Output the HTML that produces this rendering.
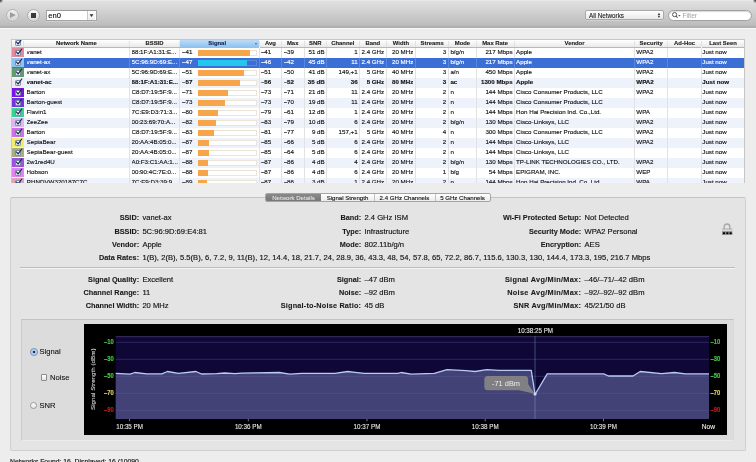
<!DOCTYPE html>
<html><head><meta charset="utf-8"><style>
*{box-sizing:border-box}
html,body{margin:0;padding:0}
body{width:756px;height:462px;overflow:hidden;position:relative;background:#ededed;font-family:"Liberation Sans",sans-serif;color:#000}
.abs{position:absolute}
#toolbar{left:0;top:0;width:756px;height:28.5px;background:linear-gradient(#eeeeee 0,#e0e0e0 1.2px,#d2d2d2 40%,#bdbdbd 88%,#a9a9a9 100%);border-bottom:1px solid #f8f8f8}
.rbtn{position:absolute;width:13px;height:13px;border-radius:50%;background:linear-gradient(#fafafa,#d8d8d8);border:1px solid #a8a8a8;box-shadow:0 0.5px 0 rgba(255,255,255,.6)}
#table{left:10.5px;top:39px;width:734.5px;height:144.3px;overflow:hidden;background:#fff;border:1px solid #c6c6c6;border-bottom:none}
.hdr{position:absolute;top:0;height:8px;-webkit-text-stroke:.1px currentColor;background:linear-gradient(#ffffff,#e9e9e9);border-bottom:1px solid #b8b8b8;font-weight:bold;font-size:5.9px;line-height:7.2px;text-align:center;color:#1a1a1a}
.hsep{position:absolute;top:1px;width:1px;height:6px;background:#e2e2e2}
.row{position:absolute;left:0;width:734px;height:10px}
.cell{position:absolute;top:-0.6px;height:10px;line-height:10px;font-size:6.2px;white-space:nowrap;overflow:hidden;color:#000;-webkit-text-stroke:0.14px currentColor}
.r{text-align:right}
.bar{position:absolute;height:6px;background:#f6a54a}
.track{position:absolute;height:6px;border:1px solid #ece4d6;background:#fff}
.cb{position:absolute;width:5.6px;height:5.6px;border:0.7px solid #7d8aa3;border-radius:1.3px;background:linear-gradient(#ffffff,#cfdcee)}
</style></head><body><div id="root" style="position:absolute;left:0;top:0;width:756px;height:462px;will-change:transform">

<div id="toolbar" class="abs"></div>
<div class="abs" style="left:0;top:0;width:4px;height:4px;background:radial-gradient(circle at 0 0,#2a2a2a 0,#5a5a5a 1px,rgba(200,200,200,0) 3.5px)"></div>
<div class="abs" style="left:752px;top:0;width:4px;height:4px;background:radial-gradient(circle at 100% 0,#2a2a2a 0,#5a5a5a 1px,rgba(200,200,200,0) 3.5px)"></div>
<div class="rbtn" style="left:6px;top:9px;opacity:.75"></div>
<svg class="abs" style="left:8px;top:11px" width="10" height="9" viewBox="8 11 10 9"><path d="M10 12.3 L15.8 15.1 L10 17.9 Z" fill="#9c9c9c"/></svg>
<div class="rbtn" style="left:26.5px;top:9px"></div>
<div class="abs" style="left:30.8px;top:12.8px;width:5.3px;height:5.2px;background:#3a3a3a"></div>
<div class="abs" style="left:46px;top:10px;width:50.5px;height:11px;background:#fff;border:1px solid #a4a4a4;border-top-color:#9a9a9a;box-shadow:0 .5px 0 rgba(255,255,255,.45)"></div>
<div class="abs" style="left:86.6px;top:11px;width:8.9px;height:9px;border-left:1px solid #c8c8c8;background:linear-gradient(#fdfdfd,#ededed)"></div>
<svg class="abs" style="left:86px;top:10px" width="10" height="11" viewBox="86 10 10 11"><path d="M89.6 14.2 H93.4 L91.5 16.9 Z" fill="#2a2a2a"/></svg>
<div class="abs" style="left:48.3px;top:11.4px;height:10px;line-height:10px;font-size:7.6px;color:#000;-webkit-text-stroke:.1px #000">en0</div>
<div class="abs" style="left:585px;top:10px;width:79px;height:10px;border-radius:2px;background:linear-gradient(#ffffff,#e8e8e8);border:1px solid #a8a8a8;box-shadow:0 .5px 0 rgba(255,255,255,.5)"></div>
<div class="abs" style="left:589px;top:10.6px;height:10px;line-height:10px;font-size:6.3px;color:#222;-webkit-text-stroke:.1px #222">All Networks</div>
<div class="abs" style="left:657px;top:11.5px;font-size:4px;line-height:3.5px;color:#333">&#9650;<br>&#9660;</div>
<div class="abs" style="left:668px;top:10px;width:83.5px;height:11px;border-radius:6px;background:#fff;border:1px solid #a0a0a0;box-shadow:inset 0 1px 1px rgba(0,0,0,.15)"></div>
<svg class="abs" style="left:670px;top:10px" width="12" height="11" viewBox="670 10 12 11"><circle cx="674.6" cy="14.6" r="2.1" fill="none" stroke="#5a5a5a" stroke-width="1"/><line x1="676.1" y1="16.1" x2="677.6" y2="17.6" stroke="#5a5a5a" stroke-width="1.2"/><path d="M678.2 15h2.4l-1.2 1.4z" fill="#5a5a5a"/></svg>
<div class="abs" style="left:682.5px;top:10px;height:11px;line-height:11px;font-size:6.5px;color:#a0a0a0">Filter</div>
<div id="table" class="abs">
<div class="hdr" style="left:0.0px;width:12.100000000000001px;"></div>
<div class="hdr" style="left:12.100000000000001px;width:105.5px;">Network Name</div>
<div class="hsep" style="left:11.600000000000001px"></div>
<div class="hdr" style="left:117.6px;width:50.80000000000001px;">BSSID</div>
<div class="hsep" style="left:117.1px"></div>
<div class="hdr" style="left:168.4px;width:79.6px;background:linear-gradient(#bcdcf8,#8fc3f0);color:#10204a;padding-right:5px;">Signal</div>
<div class="hsep" style="left:167.9px"></div>
<div class="hdr" style="left:248.0px;width:21.69999999999999px;">Avg</div>
<div class="hsep" style="left:247.5px"></div>
<div class="hdr" style="left:269.7px;width:23.0px;">Max</div>
<div class="hsep" style="left:269.2px"></div>
<div class="hdr" style="left:292.7px;width:22.0px;">SNR</div>
<div class="hsep" style="left:292.2px"></div>
<div class="hdr" style="left:314.7px;width:33.19999999999999px;">Channel</div>
<div class="hsep" style="left:314.2px"></div>
<div class="hdr" style="left:347.9px;width:26.80000000000001px;">Band</div>
<div class="hsep" style="left:347.4px"></div>
<div class="hdr" style="left:374.7px;width:29.5px;">Width</div>
<div class="hsep" style="left:374.2px"></div>
<div class="hdr" style="left:404.2px;width:33.10000000000002px;">Streams</div>
<div class="hsep" style="left:403.7px"></div>
<div class="hdr" style="left:437.3px;width:27.30000000000001px;">Mode</div>
<div class="hsep" style="left:436.8px"></div>
<div class="hdr" style="left:464.6px;width:38.10000000000002px;">Max Rate</div>
<div class="hsep" style="left:464.1px"></div>
<div class="hdr" style="left:502.70000000000005px;width:120.69999999999993px;">Vendor</div>
<div class="hsep" style="left:502.20000000000005px"></div>
<div class="hdr" style="left:623.4px;width:32.700000000000045px;">Security</div>
<div class="hsep" style="left:622.9px"></div>
<div class="hdr" style="left:656.1px;width:33.89999999999998px;">Ad-Hoc</div>
<div class="hsep" style="left:655.6px"></div>
<div class="hdr" style="left:690.0px;width:43.10000000000002px;">Last Seen</div>
<div class="hsep" style="left:689.5px"></div>
<div class="cb" style="left:3.5px;top:0.2px"></div>
<div class="abs" style="left:243.3px;top:3px;width:0;height:0;border-top:2.4px solid #40608a;border-left:1.6px solid transparent;border-right:1.6px solid transparent"></div>
<svg class="abs" style="left:0px;top:-2.1px" width="13" height="10" viewBox="0 0 13 10"><path d="M4.3 3.9 L6.1 5.8 L9.8 1.0" fill="none" stroke="#14234f" stroke-width="1.15" stroke-linecap="round" stroke-linejoin="round"/></svg>
<div class="row" style="top:8px;background:#ffffff">
<div class="abs" style="left:0.1px;top:0;width:12.4px;height:9.4px;background:#e58a9a"></div>
<div class="cb" style="left:3.5px;top:2.0px"></div>
<svg class="abs" style="left:0px;top:0px" width="13" height="10" viewBox="0 0 13 10"><path d="M4.3 3.9 L6.1 5.8 L9.8 1.0" fill="none" stroke="#14234f" stroke-width="1.15" stroke-linecap="round" stroke-linejoin="round"/></svg>
<div class="cell" style="left:15.100000000000001px;width:102.5px;color:#111;">vanet</div>
<div class="cell" style="left:120.0px;width:48.40000000000001px;color:#111;">88:1F:A1:31:E...</div>
<div class="cell" style="left:170.6px;width:77.39999999999999px;color:#111;">–41</div>
<div class="track" style="left:186.9px;top:2.1px;width:58.400000000000006px;"></div>
<div class="bar" style="left:186.9px;top:2.1px;width:52px;"></div>
<div class="cell" style="left:249.4px;width:20.29999999999999px;color:#111;">–41</div>
<div class="cell" style="left:272.0px;width:20.7px;color:#111;">–39</div>
<div class="cell r" style="left:292.7px;width:20.5px;color:#111;">51 dB</div>
<div class="cell r" style="left:314.7px;width:31.49999999999999px;color:#111;">1</div>
<div class="cell r" style="left:347.9px;width:24.80000000000001px;color:#111;">2.4 GHz</div>
<div class="cell r" style="left:374.7px;width:27.1px;color:#111;">20 MHz</div>
<div class="cell r" style="left:404.2px;width:30.50000000000002px;color:#111;">3</div>
<div class="cell" style="left:438.90000000000003px;width:25.70000000000001px;color:#111;">b/g/n</div>
<div class="cell r" style="left:464.6px;width:36.50000000000002px;color:#111;">217 Mbps</div>
<div class="cell" style="left:504.6px;width:118.79999999999993px;color:#111;">Apple</div>
<div class="cell" style="left:624.8px;width:31.300000000000047px;color:#111;">WPA2</div>
<div class="cell" style="left:690.8px;width:42.300000000000026px;color:#111;">Just now</div>
<div class="abs" style="left:117.1px;top:0;width:1px;height:10px;background:#e2e2e2"></div>
<div class="abs" style="left:167.9px;top:0;width:1px;height:10px;background:#e2e2e2"></div>
<div class="abs" style="left:247.5px;top:0;width:1px;height:10px;background:#e2e2e2"></div>
<div class="abs" style="left:269.2px;top:0;width:1px;height:10px;background:#e2e2e2"></div>
<div class="abs" style="left:292.2px;top:0;width:1px;height:10px;background:#e2e2e2"></div>
<div class="abs" style="left:314.2px;top:0;width:1px;height:10px;background:#e2e2e2"></div>
<div class="abs" style="left:347.4px;top:0;width:1px;height:10px;background:#e2e2e2"></div>
<div class="abs" style="left:374.2px;top:0;width:1px;height:10px;background:#e2e2e2"></div>
<div class="abs" style="left:403.7px;top:0;width:1px;height:10px;background:#e2e2e2"></div>
<div class="abs" style="left:436.8px;top:0;width:1px;height:10px;background:#e2e2e2"></div>
<div class="abs" style="left:464.1px;top:0;width:1px;height:10px;background:#e2e2e2"></div>
<div class="abs" style="left:502.20000000000005px;top:0;width:1px;height:10px;background:#e2e2e2"></div>
<div class="abs" style="left:622.9px;top:0;width:1px;height:10px;background:#e2e2e2"></div>
<div class="abs" style="left:655.6px;top:0;width:1px;height:10px;background:#e2e2e2"></div>
<div class="abs" style="left:689.5px;top:0;width:1px;height:10px;background:#e2e2e2"></div>
</div>
<div class="row" style="top:18px;background:#3b6fd6">
<div class="abs" style="left:0.1px;top:0;width:12.4px;height:9.4px;background:#8cc4f4"></div>
<div class="cb" style="left:3.5px;top:2.0px"></div>
<svg class="abs" style="left:0px;top:0px" width="13" height="10" viewBox="0 0 13 10"><path d="M4.3 3.9 L6.1 5.8 L9.8 1.0" fill="none" stroke="#14234f" stroke-width="1.15" stroke-linecap="round" stroke-linejoin="round"/></svg>
<div class="cell" style="left:15.100000000000001px;width:102.5px;color:#fff;">vanet-ax</div>
<div class="cell" style="left:120.0px;width:48.40000000000001px;color:#fff;">5C:96:9D:69:E...</div>
<div class="cell" style="left:170.6px;width:77.39999999999999px;color:#fff;">–47</div>
<div class="track" style="left:186.9px;top:2.1px;width:58.400000000000006px;background:#3b6fd6;border-color:#5a86dc"></div>
<div class="bar" style="left:186.9px;top:2.1px;width:48.7px;background:#22c6ee"></div>
<div class="cell" style="left:249.4px;width:20.29999999999999px;color:#fff;">–46</div>
<div class="cell" style="left:272.0px;width:20.7px;color:#fff;">–42</div>
<div class="cell r" style="left:292.7px;width:20.5px;color:#fff;">45 dB</div>
<div class="cell r" style="left:314.7px;width:31.49999999999999px;color:#fff;">11</div>
<div class="cell r" style="left:347.9px;width:24.80000000000001px;color:#fff;">2.4 GHz</div>
<div class="cell r" style="left:374.7px;width:27.1px;color:#fff;">20 MHz</div>
<div class="cell r" style="left:404.2px;width:30.50000000000002px;color:#fff;">3</div>
<div class="cell" style="left:438.90000000000003px;width:25.70000000000001px;color:#fff;">b/g/n</div>
<div class="cell r" style="left:464.6px;width:36.50000000000002px;color:#fff;">217 Mbps</div>
<div class="cell" style="left:504.6px;width:118.79999999999993px;color:#fff;">Apple</div>
<div class="cell" style="left:624.8px;width:31.300000000000047px;color:#fff;">WPA2</div>
<div class="cell" style="left:690.8px;width:42.300000000000026px;color:#fff;">Just now</div>
<div class="abs" style="left:117.1px;top:0;width:1px;height:10px;background:#5a86dc"></div>
<div class="abs" style="left:167.9px;top:0;width:1px;height:10px;background:#5a86dc"></div>
<div class="abs" style="left:247.5px;top:0;width:1px;height:10px;background:#5a86dc"></div>
<div class="abs" style="left:269.2px;top:0;width:1px;height:10px;background:#5a86dc"></div>
<div class="abs" style="left:292.2px;top:0;width:1px;height:10px;background:#5a86dc"></div>
<div class="abs" style="left:314.2px;top:0;width:1px;height:10px;background:#5a86dc"></div>
<div class="abs" style="left:347.4px;top:0;width:1px;height:10px;background:#5a86dc"></div>
<div class="abs" style="left:374.2px;top:0;width:1px;height:10px;background:#5a86dc"></div>
<div class="abs" style="left:403.7px;top:0;width:1px;height:10px;background:#5a86dc"></div>
<div class="abs" style="left:436.8px;top:0;width:1px;height:10px;background:#5a86dc"></div>
<div class="abs" style="left:464.1px;top:0;width:1px;height:10px;background:#5a86dc"></div>
<div class="abs" style="left:502.20000000000005px;top:0;width:1px;height:10px;background:#5a86dc"></div>
<div class="abs" style="left:622.9px;top:0;width:1px;height:10px;background:#5a86dc"></div>
<div class="abs" style="left:655.6px;top:0;width:1px;height:10px;background:#5a86dc"></div>
<div class="abs" style="left:689.5px;top:0;width:1px;height:10px;background:#5a86dc"></div>
</div>
<div class="row" style="top:28px;background:#ffffff">
<div class="abs" style="left:0.1px;top:0;width:12.4px;height:9.4px;background:#5e9c6e"></div>
<div class="cb" style="left:3.5px;top:2.0px"></div>
<svg class="abs" style="left:0px;top:0px" width="13" height="10" viewBox="0 0 13 10"><path d="M4.3 3.9 L6.1 5.8 L9.8 1.0" fill="none" stroke="#14234f" stroke-width="1.15" stroke-linecap="round" stroke-linejoin="round"/></svg>
<div class="cell" style="left:15.100000000000001px;width:102.5px;color:#111;">vanet-ax</div>
<div class="cell" style="left:120.0px;width:48.40000000000001px;color:#111;">5C:96:9D:69:E...</div>
<div class="cell" style="left:170.6px;width:77.39999999999999px;color:#111;">–51</div>
<div class="track" style="left:186.9px;top:2.1px;width:58.400000000000006px;"></div>
<div class="bar" style="left:186.9px;top:2.1px;width:46px;"></div>
<div class="cell" style="left:249.4px;width:20.29999999999999px;color:#111;">–51</div>
<div class="cell" style="left:272.0px;width:20.7px;color:#111;">–50</div>
<div class="cell r" style="left:292.7px;width:20.5px;color:#111;">41 dB</div>
<div class="cell r" style="left:314.7px;width:31.49999999999999px;color:#111;">149,+1</div>
<div class="cell r" style="left:347.9px;width:24.80000000000001px;color:#111;">5 GHz</div>
<div class="cell r" style="left:374.7px;width:27.1px;color:#111;">40 MHz</div>
<div class="cell r" style="left:404.2px;width:30.50000000000002px;color:#111;">3</div>
<div class="cell" style="left:438.90000000000003px;width:25.70000000000001px;color:#111;">a/n</div>
<div class="cell r" style="left:464.6px;width:36.50000000000002px;color:#111;">450 Mbps</div>
<div class="cell" style="left:504.6px;width:118.79999999999993px;color:#111;">Apple</div>
<div class="cell" style="left:624.8px;width:31.300000000000047px;color:#111;">WPA2</div>
<div class="cell" style="left:690.8px;width:42.300000000000026px;color:#111;">Just now</div>
<div class="abs" style="left:117.1px;top:0;width:1px;height:10px;background:#e2e2e2"></div>
<div class="abs" style="left:167.9px;top:0;width:1px;height:10px;background:#e2e2e2"></div>
<div class="abs" style="left:247.5px;top:0;width:1px;height:10px;background:#e2e2e2"></div>
<div class="abs" style="left:269.2px;top:0;width:1px;height:10px;background:#e2e2e2"></div>
<div class="abs" style="left:292.2px;top:0;width:1px;height:10px;background:#e2e2e2"></div>
<div class="abs" style="left:314.2px;top:0;width:1px;height:10px;background:#e2e2e2"></div>
<div class="abs" style="left:347.4px;top:0;width:1px;height:10px;background:#e2e2e2"></div>
<div class="abs" style="left:374.2px;top:0;width:1px;height:10px;background:#e2e2e2"></div>
<div class="abs" style="left:403.7px;top:0;width:1px;height:10px;background:#e2e2e2"></div>
<div class="abs" style="left:436.8px;top:0;width:1px;height:10px;background:#e2e2e2"></div>
<div class="abs" style="left:464.1px;top:0;width:1px;height:10px;background:#e2e2e2"></div>
<div class="abs" style="left:502.20000000000005px;top:0;width:1px;height:10px;background:#e2e2e2"></div>
<div class="abs" style="left:622.9px;top:0;width:1px;height:10px;background:#e2e2e2"></div>
<div class="abs" style="left:655.6px;top:0;width:1px;height:10px;background:#e2e2e2"></div>
<div class="abs" style="left:689.5px;top:0;width:1px;height:10px;background:#e2e2e2"></div>
</div>
<div class="row" style="top:38px;background:#eef3fb">
<div class="abs" style="left:0.1px;top:0;width:12.4px;height:9.4px;background:#f0ecf6"></div>
<div class="cb" style="left:3.5px;top:2.0px"></div>
<svg class="abs" style="left:0px;top:0px" width="13" height="10" viewBox="0 0 13 10"><path d="M4.3 3.9 L6.1 5.8 L9.8 1.0" fill="none" stroke="#14234f" stroke-width="1.15" stroke-linecap="round" stroke-linejoin="round"/></svg>
<div class="cell" style="left:15.100000000000001px;width:102.5px;color:#111;font-weight:bold;">vanet-ac</div>
<div class="cell" style="left:120.0px;width:48.40000000000001px;color:#111;font-weight:bold;">88:1F:A1:31:E...</div>
<div class="cell" style="left:170.6px;width:77.39999999999999px;color:#111;font-weight:bold;">–57</div>
<div class="track" style="left:186.9px;top:2.1px;width:58.400000000000006px;"></div>
<div class="bar" style="left:186.9px;top:2.1px;width:41.7px;"></div>
<div class="cell" style="left:249.4px;width:20.29999999999999px;color:#111;font-weight:bold;">–56</div>
<div class="cell" style="left:272.0px;width:20.7px;color:#111;font-weight:bold;">–52</div>
<div class="cell r" style="left:292.7px;width:20.5px;color:#111;font-weight:bold;">35 dB</div>
<div class="cell r" style="left:314.7px;width:31.49999999999999px;color:#111;font-weight:bold;">36</div>
<div class="cell r" style="left:347.9px;width:24.80000000000001px;color:#111;font-weight:bold;">5 GHz</div>
<div class="cell r" style="left:374.7px;width:27.1px;color:#111;font-weight:bold;">80 MHz</div>
<div class="cell r" style="left:404.2px;width:30.50000000000002px;color:#111;font-weight:bold;">3</div>
<div class="cell" style="left:438.90000000000003px;width:25.70000000000001px;color:#111;font-weight:bold;">ac</div>
<div class="cell r" style="left:464.6px;width:36.50000000000002px;color:#111;font-weight:bold;">1300 Mbps</div>
<div class="cell" style="left:504.6px;width:118.79999999999993px;color:#111;font-weight:bold;">Apple</div>
<div class="cell" style="left:624.8px;width:31.300000000000047px;color:#111;font-weight:bold;">WPA2</div>
<div class="cell" style="left:690.8px;width:42.300000000000026px;color:#111;font-weight:bold;">Just now</div>
<div class="abs" style="left:117.1px;top:0;width:1px;height:10px;background:#e2e2e2"></div>
<div class="abs" style="left:167.9px;top:0;width:1px;height:10px;background:#e2e2e2"></div>
<div class="abs" style="left:247.5px;top:0;width:1px;height:10px;background:#e2e2e2"></div>
<div class="abs" style="left:269.2px;top:0;width:1px;height:10px;background:#e2e2e2"></div>
<div class="abs" style="left:292.2px;top:0;width:1px;height:10px;background:#e2e2e2"></div>
<div class="abs" style="left:314.2px;top:0;width:1px;height:10px;background:#e2e2e2"></div>
<div class="abs" style="left:347.4px;top:0;width:1px;height:10px;background:#e2e2e2"></div>
<div class="abs" style="left:374.2px;top:0;width:1px;height:10px;background:#e2e2e2"></div>
<div class="abs" style="left:403.7px;top:0;width:1px;height:10px;background:#e2e2e2"></div>
<div class="abs" style="left:436.8px;top:0;width:1px;height:10px;background:#e2e2e2"></div>
<div class="abs" style="left:464.1px;top:0;width:1px;height:10px;background:#e2e2e2"></div>
<div class="abs" style="left:502.20000000000005px;top:0;width:1px;height:10px;background:#e2e2e2"></div>
<div class="abs" style="left:622.9px;top:0;width:1px;height:10px;background:#e2e2e2"></div>
<div class="abs" style="left:655.6px;top:0;width:1px;height:10px;background:#e2e2e2"></div>
<div class="abs" style="left:689.5px;top:0;width:1px;height:10px;background:#e2e2e2"></div>
</div>
<div class="row" style="top:48px;background:#ffffff">
<div class="abs" style="left:0.1px;top:0;width:12.4px;height:9.4px;background:#7a14e6"></div>
<div class="cb" style="left:3.5px;top:2.0px"></div>
<svg class="abs" style="left:0px;top:0px" width="13" height="10" viewBox="0 0 13 10"><path d="M4.3 3.9 L6.1 5.8 L9.8 1.0" fill="none" stroke="#14234f" stroke-width="1.15" stroke-linecap="round" stroke-linejoin="round"/></svg>
<div class="cell" style="left:15.100000000000001px;width:102.5px;color:#111;">Barton</div>
<div class="cell" style="left:120.0px;width:48.40000000000001px;color:#111;">C8:D7:19:5F:9...</div>
<div class="cell" style="left:170.6px;width:77.39999999999999px;color:#111;">–71</div>
<div class="track" style="left:186.9px;top:2.1px;width:58.400000000000006px;"></div>
<div class="bar" style="left:186.9px;top:2.1px;width:29.6px;"></div>
<div class="cell" style="left:249.4px;width:20.29999999999999px;color:#111;">–73</div>
<div class="cell" style="left:272.0px;width:20.7px;color:#111;">–71</div>
<div class="cell r" style="left:292.7px;width:20.5px;color:#111;">21 dB</div>
<div class="cell r" style="left:314.7px;width:31.49999999999999px;color:#111;">11</div>
<div class="cell r" style="left:347.9px;width:24.80000000000001px;color:#111;">2.4 GHz</div>
<div class="cell r" style="left:374.7px;width:27.1px;color:#111;">20 MHz</div>
<div class="cell r" style="left:404.2px;width:30.50000000000002px;color:#111;">2</div>
<div class="cell" style="left:438.90000000000003px;width:25.70000000000001px;color:#111;">n</div>
<div class="cell r" style="left:464.6px;width:36.50000000000002px;color:#111;">144 Mbps</div>
<div class="cell" style="left:504.6px;width:118.79999999999993px;color:#111;">Cisco Consumer Products, LLC</div>
<div class="cell" style="left:624.8px;width:31.300000000000047px;color:#111;">WPA2</div>
<div class="cell" style="left:690.8px;width:42.300000000000026px;color:#111;">Just now</div>
<div class="abs" style="left:117.1px;top:0;width:1px;height:10px;background:#e2e2e2"></div>
<div class="abs" style="left:167.9px;top:0;width:1px;height:10px;background:#e2e2e2"></div>
<div class="abs" style="left:247.5px;top:0;width:1px;height:10px;background:#e2e2e2"></div>
<div class="abs" style="left:269.2px;top:0;width:1px;height:10px;background:#e2e2e2"></div>
<div class="abs" style="left:292.2px;top:0;width:1px;height:10px;background:#e2e2e2"></div>
<div class="abs" style="left:314.2px;top:0;width:1px;height:10px;background:#e2e2e2"></div>
<div class="abs" style="left:347.4px;top:0;width:1px;height:10px;background:#e2e2e2"></div>
<div class="abs" style="left:374.2px;top:0;width:1px;height:10px;background:#e2e2e2"></div>
<div class="abs" style="left:403.7px;top:0;width:1px;height:10px;background:#e2e2e2"></div>
<div class="abs" style="left:436.8px;top:0;width:1px;height:10px;background:#e2e2e2"></div>
<div class="abs" style="left:464.1px;top:0;width:1px;height:10px;background:#e2e2e2"></div>
<div class="abs" style="left:502.20000000000005px;top:0;width:1px;height:10px;background:#e2e2e2"></div>
<div class="abs" style="left:622.9px;top:0;width:1px;height:10px;background:#e2e2e2"></div>
<div class="abs" style="left:655.6px;top:0;width:1px;height:10px;background:#e2e2e2"></div>
<div class="abs" style="left:689.5px;top:0;width:1px;height:10px;background:#e2e2e2"></div>
</div>
<div class="row" style="top:58px;background:#eef3fb">
<div class="abs" style="left:0.1px;top:0;width:12.4px;height:9.4px;background:#7234de"></div>
<div class="cb" style="left:3.5px;top:2.0px"></div>
<svg class="abs" style="left:0px;top:0px" width="13" height="10" viewBox="0 0 13 10"><path d="M4.3 3.9 L6.1 5.8 L9.8 1.0" fill="none" stroke="#14234f" stroke-width="1.15" stroke-linecap="round" stroke-linejoin="round"/></svg>
<div class="cell" style="left:15.100000000000001px;width:102.5px;color:#111;">Barton-guest</div>
<div class="cell" style="left:120.0px;width:48.40000000000001px;color:#111;">C8:D7:19:5F:9...</div>
<div class="cell" style="left:170.6px;width:77.39999999999999px;color:#111;">–73</div>
<div class="track" style="left:186.9px;top:2.1px;width:58.400000000000006px;"></div>
<div class="bar" style="left:186.9px;top:2.1px;width:27px;"></div>
<div class="cell" style="left:249.4px;width:20.29999999999999px;color:#111;">–73</div>
<div class="cell" style="left:272.0px;width:20.7px;color:#111;">–70</div>
<div class="cell r" style="left:292.7px;width:20.5px;color:#111;">19 dB</div>
<div class="cell r" style="left:314.7px;width:31.49999999999999px;color:#111;">11</div>
<div class="cell r" style="left:347.9px;width:24.80000000000001px;color:#111;">2.4 GHz</div>
<div class="cell r" style="left:374.7px;width:27.1px;color:#111;">20 MHz</div>
<div class="cell r" style="left:404.2px;width:30.50000000000002px;color:#111;">2</div>
<div class="cell" style="left:438.90000000000003px;width:25.70000000000001px;color:#111;">n</div>
<div class="cell r" style="left:464.6px;width:36.50000000000002px;color:#111;">144 Mbps</div>
<div class="cell" style="left:504.6px;width:118.79999999999993px;color:#111;">Cisco Consumer Products, LLC</div>
<div class="cell" style="left:624.8px;width:31.300000000000047px;color:#111;"></div>
<div class="cell" style="left:690.8px;width:42.300000000000026px;color:#111;">Just now</div>
<div class="abs" style="left:117.1px;top:0;width:1px;height:10px;background:#e2e2e2"></div>
<div class="abs" style="left:167.9px;top:0;width:1px;height:10px;background:#e2e2e2"></div>
<div class="abs" style="left:247.5px;top:0;width:1px;height:10px;background:#e2e2e2"></div>
<div class="abs" style="left:269.2px;top:0;width:1px;height:10px;background:#e2e2e2"></div>
<div class="abs" style="left:292.2px;top:0;width:1px;height:10px;background:#e2e2e2"></div>
<div class="abs" style="left:314.2px;top:0;width:1px;height:10px;background:#e2e2e2"></div>
<div class="abs" style="left:347.4px;top:0;width:1px;height:10px;background:#e2e2e2"></div>
<div class="abs" style="left:374.2px;top:0;width:1px;height:10px;background:#e2e2e2"></div>
<div class="abs" style="left:403.7px;top:0;width:1px;height:10px;background:#e2e2e2"></div>
<div class="abs" style="left:436.8px;top:0;width:1px;height:10px;background:#e2e2e2"></div>
<div class="abs" style="left:464.1px;top:0;width:1px;height:10px;background:#e2e2e2"></div>
<div class="abs" style="left:502.20000000000005px;top:0;width:1px;height:10px;background:#e2e2e2"></div>
<div class="abs" style="left:622.9px;top:0;width:1px;height:10px;background:#e2e2e2"></div>
<div class="abs" style="left:655.6px;top:0;width:1px;height:10px;background:#e2e2e2"></div>
<div class="abs" style="left:689.5px;top:0;width:1px;height:10px;background:#e2e2e2"></div>
</div>
<div class="row" style="top:68px;background:#ffffff">
<div class="abs" style="left:0.1px;top:0;width:12.4px;height:9.4px;background:#34d48e"></div>
<div class="cb" style="left:3.5px;top:2.0px"></div>
<svg class="abs" style="left:0px;top:0px" width="13" height="10" viewBox="0 0 13 10"><path d="M4.3 3.9 L6.1 5.8 L9.8 1.0" fill="none" stroke="#14234f" stroke-width="1.15" stroke-linecap="round" stroke-linejoin="round"/></svg>
<div class="cell" style="left:15.100000000000001px;width:102.5px;color:#111;">Flavin1</div>
<div class="cell" style="left:120.0px;width:48.40000000000001px;color:#111;">7C:E9:D3:71:3...</div>
<div class="cell" style="left:170.6px;width:77.39999999999999px;color:#111;">–80</div>
<div class="track" style="left:186.9px;top:2.1px;width:58.400000000000006px;"></div>
<div class="bar" style="left:186.9px;top:2.1px;width:19.5px;"></div>
<div class="cell" style="left:249.4px;width:20.29999999999999px;color:#111;">–79</div>
<div class="cell" style="left:272.0px;width:20.7px;color:#111;">–61</div>
<div class="cell r" style="left:292.7px;width:20.5px;color:#111;">12 dB</div>
<div class="cell r" style="left:314.7px;width:31.49999999999999px;color:#111;">1</div>
<div class="cell r" style="left:347.9px;width:24.80000000000001px;color:#111;">2.4 GHz</div>
<div class="cell r" style="left:374.7px;width:27.1px;color:#111;">20 MHz</div>
<div class="cell r" style="left:404.2px;width:30.50000000000002px;color:#111;">2</div>
<div class="cell" style="left:438.90000000000003px;width:25.70000000000001px;color:#111;">n</div>
<div class="cell r" style="left:464.6px;width:36.50000000000002px;color:#111;">144 Mbps</div>
<div class="cell" style="left:504.6px;width:118.79999999999993px;color:#111;">Hon Hai Precision Ind. Co.,Ltd.</div>
<div class="cell" style="left:624.8px;width:31.300000000000047px;color:#111;">WPA</div>
<div class="cell" style="left:690.8px;width:42.300000000000026px;color:#111;">Just now</div>
<div class="abs" style="left:117.1px;top:0;width:1px;height:10px;background:#e2e2e2"></div>
<div class="abs" style="left:167.9px;top:0;width:1px;height:10px;background:#e2e2e2"></div>
<div class="abs" style="left:247.5px;top:0;width:1px;height:10px;background:#e2e2e2"></div>
<div class="abs" style="left:269.2px;top:0;width:1px;height:10px;background:#e2e2e2"></div>
<div class="abs" style="left:292.2px;top:0;width:1px;height:10px;background:#e2e2e2"></div>
<div class="abs" style="left:314.2px;top:0;width:1px;height:10px;background:#e2e2e2"></div>
<div class="abs" style="left:347.4px;top:0;width:1px;height:10px;background:#e2e2e2"></div>
<div class="abs" style="left:374.2px;top:0;width:1px;height:10px;background:#e2e2e2"></div>
<div class="abs" style="left:403.7px;top:0;width:1px;height:10px;background:#e2e2e2"></div>
<div class="abs" style="left:436.8px;top:0;width:1px;height:10px;background:#e2e2e2"></div>
<div class="abs" style="left:464.1px;top:0;width:1px;height:10px;background:#e2e2e2"></div>
<div class="abs" style="left:502.20000000000005px;top:0;width:1px;height:10px;background:#e2e2e2"></div>
<div class="abs" style="left:622.9px;top:0;width:1px;height:10px;background:#e2e2e2"></div>
<div class="abs" style="left:655.6px;top:0;width:1px;height:10px;background:#e2e2e2"></div>
<div class="abs" style="left:689.5px;top:0;width:1px;height:10px;background:#e2e2e2"></div>
</div>
<div class="row" style="top:78px;background:#eef3fb">
<div class="abs" style="left:0.1px;top:0;width:12.4px;height:9.4px;background:#dcb8f0"></div>
<div class="cb" style="left:3.5px;top:2.0px"></div>
<svg class="abs" style="left:0px;top:0px" width="13" height="10" viewBox="0 0 13 10"><path d="M4.3 3.9 L6.1 5.8 L9.8 1.0" fill="none" stroke="#14234f" stroke-width="1.15" stroke-linecap="round" stroke-linejoin="round"/></svg>
<div class="cell" style="left:15.100000000000001px;width:102.5px;color:#111;">ZeeZee</div>
<div class="cell" style="left:120.0px;width:48.40000000000001px;color:#111;">00:23:69:70:A...</div>
<div class="cell" style="left:170.6px;width:77.39999999999999px;color:#111;">–82</div>
<div class="track" style="left:186.9px;top:2.1px;width:58.400000000000006px;"></div>
<div class="bar" style="left:186.9px;top:2.1px;width:17.3px;"></div>
<div class="cell" style="left:249.4px;width:20.29999999999999px;color:#111;">–83</div>
<div class="cell" style="left:272.0px;width:20.7px;color:#111;">–79</div>
<div class="cell r" style="left:292.7px;width:20.5px;color:#111;">10 dB</div>
<div class="cell r" style="left:314.7px;width:31.49999999999999px;color:#111;">6</div>
<div class="cell r" style="left:347.9px;width:24.80000000000001px;color:#111;">2.4 GHz</div>
<div class="cell r" style="left:374.7px;width:27.1px;color:#111;">20 MHz</div>
<div class="cell r" style="left:404.2px;width:30.50000000000002px;color:#111;">2</div>
<div class="cell" style="left:438.90000000000003px;width:25.70000000000001px;color:#111;">b/g/n</div>
<div class="cell r" style="left:464.6px;width:36.50000000000002px;color:#111;">130 Mbps</div>
<div class="cell" style="left:504.6px;width:118.79999999999993px;color:#111;">Cisco-Linksys, LLC</div>
<div class="cell" style="left:624.8px;width:31.300000000000047px;color:#111;">WPA2</div>
<div class="cell" style="left:690.8px;width:42.300000000000026px;color:#111;">Just now</div>
<div class="abs" style="left:117.1px;top:0;width:1px;height:10px;background:#e2e2e2"></div>
<div class="abs" style="left:167.9px;top:0;width:1px;height:10px;background:#e2e2e2"></div>
<div class="abs" style="left:247.5px;top:0;width:1px;height:10px;background:#e2e2e2"></div>
<div class="abs" style="left:269.2px;top:0;width:1px;height:10px;background:#e2e2e2"></div>
<div class="abs" style="left:292.2px;top:0;width:1px;height:10px;background:#e2e2e2"></div>
<div class="abs" style="left:314.2px;top:0;width:1px;height:10px;background:#e2e2e2"></div>
<div class="abs" style="left:347.4px;top:0;width:1px;height:10px;background:#e2e2e2"></div>
<div class="abs" style="left:374.2px;top:0;width:1px;height:10px;background:#e2e2e2"></div>
<div class="abs" style="left:403.7px;top:0;width:1px;height:10px;background:#e2e2e2"></div>
<div class="abs" style="left:436.8px;top:0;width:1px;height:10px;background:#e2e2e2"></div>
<div class="abs" style="left:464.1px;top:0;width:1px;height:10px;background:#e2e2e2"></div>
<div class="abs" style="left:502.20000000000005px;top:0;width:1px;height:10px;background:#e2e2e2"></div>
<div class="abs" style="left:622.9px;top:0;width:1px;height:10px;background:#e2e2e2"></div>
<div class="abs" style="left:655.6px;top:0;width:1px;height:10px;background:#e2e2e2"></div>
<div class="abs" style="left:689.5px;top:0;width:1px;height:10px;background:#e2e2e2"></div>
</div>
<div class="row" style="top:88px;background:#ffffff">
<div class="abs" style="left:0.1px;top:0;width:12.4px;height:9.4px;background:#d070e6"></div>
<div class="cb" style="left:3.5px;top:2.0px"></div>
<svg class="abs" style="left:0px;top:0px" width="13" height="10" viewBox="0 0 13 10"><path d="M4.3 3.9 L6.1 5.8 L9.8 1.0" fill="none" stroke="#14234f" stroke-width="1.15" stroke-linecap="round" stroke-linejoin="round"/></svg>
<div class="cell" style="left:15.100000000000001px;width:102.5px;color:#111;">Barton</div>
<div class="cell" style="left:120.0px;width:48.40000000000001px;color:#111;">C8:D7:19:5F:9...</div>
<div class="cell" style="left:170.6px;width:77.39999999999999px;color:#111;">–83</div>
<div class="track" style="left:186.9px;top:2.1px;width:58.400000000000006px;"></div>
<div class="bar" style="left:186.9px;top:2.1px;width:16.1px;"></div>
<div class="cell" style="left:249.4px;width:20.29999999999999px;color:#111;">–81</div>
<div class="cell" style="left:272.0px;width:20.7px;color:#111;">–77</div>
<div class="cell r" style="left:292.7px;width:20.5px;color:#111;">9 dB</div>
<div class="cell r" style="left:314.7px;width:31.49999999999999px;color:#111;">157,+1</div>
<div class="cell r" style="left:347.9px;width:24.80000000000001px;color:#111;">5 GHz</div>
<div class="cell r" style="left:374.7px;width:27.1px;color:#111;">40 MHz</div>
<div class="cell r" style="left:404.2px;width:30.50000000000002px;color:#111;">4</div>
<div class="cell" style="left:438.90000000000003px;width:25.70000000000001px;color:#111;">n</div>
<div class="cell r" style="left:464.6px;width:36.50000000000002px;color:#111;">300 Mbps</div>
<div class="cell" style="left:504.6px;width:118.79999999999993px;color:#111;">Cisco Consumer Products, LLC</div>
<div class="cell" style="left:624.8px;width:31.300000000000047px;color:#111;">WPA2</div>
<div class="cell" style="left:690.8px;width:42.300000000000026px;color:#111;">Just now</div>
<div class="abs" style="left:117.1px;top:0;width:1px;height:10px;background:#e2e2e2"></div>
<div class="abs" style="left:167.9px;top:0;width:1px;height:10px;background:#e2e2e2"></div>
<div class="abs" style="left:247.5px;top:0;width:1px;height:10px;background:#e2e2e2"></div>
<div class="abs" style="left:269.2px;top:0;width:1px;height:10px;background:#e2e2e2"></div>
<div class="abs" style="left:292.2px;top:0;width:1px;height:10px;background:#e2e2e2"></div>
<div class="abs" style="left:314.2px;top:0;width:1px;height:10px;background:#e2e2e2"></div>
<div class="abs" style="left:347.4px;top:0;width:1px;height:10px;background:#e2e2e2"></div>
<div class="abs" style="left:374.2px;top:0;width:1px;height:10px;background:#e2e2e2"></div>
<div class="abs" style="left:403.7px;top:0;width:1px;height:10px;background:#e2e2e2"></div>
<div class="abs" style="left:436.8px;top:0;width:1px;height:10px;background:#e2e2e2"></div>
<div class="abs" style="left:464.1px;top:0;width:1px;height:10px;background:#e2e2e2"></div>
<div class="abs" style="left:502.20000000000005px;top:0;width:1px;height:10px;background:#e2e2e2"></div>
<div class="abs" style="left:622.9px;top:0;width:1px;height:10px;background:#e2e2e2"></div>
<div class="abs" style="left:655.6px;top:0;width:1px;height:10px;background:#e2e2e2"></div>
<div class="abs" style="left:689.5px;top:0;width:1px;height:10px;background:#e2e2e2"></div>
</div>
<div class="row" style="top:98px;background:#eef3fb">
<div class="abs" style="left:0.1px;top:0;width:12.4px;height:9.4px;background:#eeee72"></div>
<div class="cb" style="left:3.5px;top:2.0px"></div>
<svg class="abs" style="left:0px;top:0px" width="13" height="10" viewBox="0 0 13 10"><path d="M4.3 3.9 L6.1 5.8 L9.8 1.0" fill="none" stroke="#14234f" stroke-width="1.15" stroke-linecap="round" stroke-linejoin="round"/></svg>
<div class="cell" style="left:15.100000000000001px;width:102.5px;color:#111;">SepiaBear</div>
<div class="cell" style="left:120.0px;width:48.40000000000001px;color:#111;">20:AA:4B:05:0...</div>
<div class="cell" style="left:170.6px;width:77.39999999999999px;color:#111;">–87</div>
<div class="track" style="left:186.9px;top:2.1px;width:58.400000000000006px;"></div>
<div class="bar" style="left:186.9px;top:2.1px;width:10.5px;"></div>
<div class="cell" style="left:249.4px;width:20.29999999999999px;color:#111;">–85</div>
<div class="cell" style="left:272.0px;width:20.7px;color:#111;">–66</div>
<div class="cell r" style="left:292.7px;width:20.5px;color:#111;">5 dB</div>
<div class="cell r" style="left:314.7px;width:31.49999999999999px;color:#111;">6</div>
<div class="cell r" style="left:347.9px;width:24.80000000000001px;color:#111;">2.4 GHz</div>
<div class="cell r" style="left:374.7px;width:27.1px;color:#111;">20 MHz</div>
<div class="cell r" style="left:404.2px;width:30.50000000000002px;color:#111;">2</div>
<div class="cell" style="left:438.90000000000003px;width:25.70000000000001px;color:#111;">n</div>
<div class="cell r" style="left:464.6px;width:36.50000000000002px;color:#111;">144 Mbps</div>
<div class="cell" style="left:504.6px;width:118.79999999999993px;color:#111;">Cisco-Linksys, LLC</div>
<div class="cell" style="left:624.8px;width:31.300000000000047px;color:#111;">WPA2</div>
<div class="cell" style="left:690.8px;width:42.300000000000026px;color:#111;">Just now</div>
<div class="abs" style="left:117.1px;top:0;width:1px;height:10px;background:#e2e2e2"></div>
<div class="abs" style="left:167.9px;top:0;width:1px;height:10px;background:#e2e2e2"></div>
<div class="abs" style="left:247.5px;top:0;width:1px;height:10px;background:#e2e2e2"></div>
<div class="abs" style="left:269.2px;top:0;width:1px;height:10px;background:#e2e2e2"></div>
<div class="abs" style="left:292.2px;top:0;width:1px;height:10px;background:#e2e2e2"></div>
<div class="abs" style="left:314.2px;top:0;width:1px;height:10px;background:#e2e2e2"></div>
<div class="abs" style="left:347.4px;top:0;width:1px;height:10px;background:#e2e2e2"></div>
<div class="abs" style="left:374.2px;top:0;width:1px;height:10px;background:#e2e2e2"></div>
<div class="abs" style="left:403.7px;top:0;width:1px;height:10px;background:#e2e2e2"></div>
<div class="abs" style="left:436.8px;top:0;width:1px;height:10px;background:#e2e2e2"></div>
<div class="abs" style="left:464.1px;top:0;width:1px;height:10px;background:#e2e2e2"></div>
<div class="abs" style="left:502.20000000000005px;top:0;width:1px;height:10px;background:#e2e2e2"></div>
<div class="abs" style="left:622.9px;top:0;width:1px;height:10px;background:#e2e2e2"></div>
<div class="abs" style="left:655.6px;top:0;width:1px;height:10px;background:#e2e2e2"></div>
<div class="abs" style="left:689.5px;top:0;width:1px;height:10px;background:#e2e2e2"></div>
</div>
<div class="row" style="top:108px;background:#ffffff">
<div class="abs" style="left:0.1px;top:0;width:12.4px;height:9.4px;background:#a8ae80"></div>
<div class="cb" style="left:3.5px;top:2.0px"></div>
<svg class="abs" style="left:0px;top:0px" width="13" height="10" viewBox="0 0 13 10"><path d="M4.3 3.9 L6.1 5.8 L9.8 1.0" fill="none" stroke="#14234f" stroke-width="1.15" stroke-linecap="round" stroke-linejoin="round"/></svg>
<div class="cell" style="left:15.100000000000001px;width:102.5px;color:#111;">SepiaBear-guest</div>
<div class="cell" style="left:120.0px;width:48.40000000000001px;color:#111;">20:AA:4B:05:0...</div>
<div class="cell" style="left:170.6px;width:77.39999999999999px;color:#111;">–87</div>
<div class="track" style="left:186.9px;top:2.1px;width:58.400000000000006px;"></div>
<div class="bar" style="left:186.9px;top:2.1px;width:10.5px;"></div>
<div class="cell" style="left:249.4px;width:20.29999999999999px;color:#111;">–85</div>
<div class="cell" style="left:272.0px;width:20.7px;color:#111;">–64</div>
<div class="cell r" style="left:292.7px;width:20.5px;color:#111;">5 dB</div>
<div class="cell r" style="left:314.7px;width:31.49999999999999px;color:#111;">6</div>
<div class="cell r" style="left:347.9px;width:24.80000000000001px;color:#111;">2.4 GHz</div>
<div class="cell r" style="left:374.7px;width:27.1px;color:#111;">20 MHz</div>
<div class="cell r" style="left:404.2px;width:30.50000000000002px;color:#111;">2</div>
<div class="cell" style="left:438.90000000000003px;width:25.70000000000001px;color:#111;">n</div>
<div class="cell r" style="left:464.6px;width:36.50000000000002px;color:#111;">144 Mbps</div>
<div class="cell" style="left:504.6px;width:118.79999999999993px;color:#111;">Cisco-Linksys, LLC</div>
<div class="cell" style="left:624.8px;width:31.300000000000047px;color:#111;"></div>
<div class="cell" style="left:690.8px;width:42.300000000000026px;color:#111;">Just now</div>
<div class="abs" style="left:117.1px;top:0;width:1px;height:10px;background:#e2e2e2"></div>
<div class="abs" style="left:167.9px;top:0;width:1px;height:10px;background:#e2e2e2"></div>
<div class="abs" style="left:247.5px;top:0;width:1px;height:10px;background:#e2e2e2"></div>
<div class="abs" style="left:269.2px;top:0;width:1px;height:10px;background:#e2e2e2"></div>
<div class="abs" style="left:292.2px;top:0;width:1px;height:10px;background:#e2e2e2"></div>
<div class="abs" style="left:314.2px;top:0;width:1px;height:10px;background:#e2e2e2"></div>
<div class="abs" style="left:347.4px;top:0;width:1px;height:10px;background:#e2e2e2"></div>
<div class="abs" style="left:374.2px;top:0;width:1px;height:10px;background:#e2e2e2"></div>
<div class="abs" style="left:403.7px;top:0;width:1px;height:10px;background:#e2e2e2"></div>
<div class="abs" style="left:436.8px;top:0;width:1px;height:10px;background:#e2e2e2"></div>
<div class="abs" style="left:464.1px;top:0;width:1px;height:10px;background:#e2e2e2"></div>
<div class="abs" style="left:502.20000000000005px;top:0;width:1px;height:10px;background:#e2e2e2"></div>
<div class="abs" style="left:622.9px;top:0;width:1px;height:10px;background:#e2e2e2"></div>
<div class="abs" style="left:655.6px;top:0;width:1px;height:10px;background:#e2e2e2"></div>
<div class="abs" style="left:689.5px;top:0;width:1px;height:10px;background:#e2e2e2"></div>
</div>
<div class="row" style="top:118px;background:#eef3fb">
<div class="abs" style="left:0.1px;top:0;width:12.4px;height:9.4px;background:#9a52e0"></div>
<div class="cb" style="left:3.5px;top:2.0px"></div>
<svg class="abs" style="left:0px;top:0px" width="13" height="10" viewBox="0 0 13 10"><path d="M4.3 3.9 L6.1 5.8 L9.8 1.0" fill="none" stroke="#14234f" stroke-width="1.15" stroke-linecap="round" stroke-linejoin="round"/></svg>
<div class="cell" style="left:15.100000000000001px;width:102.5px;color:#111;">2w1red4U</div>
<div class="cell" style="left:120.0px;width:48.40000000000001px;color:#111;">A0:F3:C1:AA:1...</div>
<div class="cell" style="left:170.6px;width:77.39999999999999px;color:#111;">–88</div>
<div class="track" style="left:186.9px;top:2.1px;width:58.400000000000006px;"></div>
<div class="bar" style="left:186.9px;top:2.1px;width:9.7px;"></div>
<div class="cell" style="left:249.4px;width:20.29999999999999px;color:#111;">–87</div>
<div class="cell" style="left:272.0px;width:20.7px;color:#111;">–86</div>
<div class="cell r" style="left:292.7px;width:20.5px;color:#111;">4 dB</div>
<div class="cell r" style="left:314.7px;width:31.49999999999999px;color:#111;">4</div>
<div class="cell r" style="left:347.9px;width:24.80000000000001px;color:#111;">2.4 GHz</div>
<div class="cell r" style="left:374.7px;width:27.1px;color:#111;">20 MHz</div>
<div class="cell r" style="left:404.2px;width:30.50000000000002px;color:#111;">2</div>
<div class="cell" style="left:438.90000000000003px;width:25.70000000000001px;color:#111;">b/g/n</div>
<div class="cell r" style="left:464.6px;width:36.50000000000002px;color:#111;">130 Mbps</div>
<div class="cell" style="left:504.6px;width:118.79999999999993px;color:#111;">TP-LINK TECHNOLOGIES CO., LTD.</div>
<div class="cell" style="left:624.8px;width:31.300000000000047px;color:#111;">WPA2</div>
<div class="cell" style="left:690.8px;width:42.300000000000026px;color:#111;">Just now</div>
<div class="abs" style="left:117.1px;top:0;width:1px;height:10px;background:#e2e2e2"></div>
<div class="abs" style="left:167.9px;top:0;width:1px;height:10px;background:#e2e2e2"></div>
<div class="abs" style="left:247.5px;top:0;width:1px;height:10px;background:#e2e2e2"></div>
<div class="abs" style="left:269.2px;top:0;width:1px;height:10px;background:#e2e2e2"></div>
<div class="abs" style="left:292.2px;top:0;width:1px;height:10px;background:#e2e2e2"></div>
<div class="abs" style="left:314.2px;top:0;width:1px;height:10px;background:#e2e2e2"></div>
<div class="abs" style="left:347.4px;top:0;width:1px;height:10px;background:#e2e2e2"></div>
<div class="abs" style="left:374.2px;top:0;width:1px;height:10px;background:#e2e2e2"></div>
<div class="abs" style="left:403.7px;top:0;width:1px;height:10px;background:#e2e2e2"></div>
<div class="abs" style="left:436.8px;top:0;width:1px;height:10px;background:#e2e2e2"></div>
<div class="abs" style="left:464.1px;top:0;width:1px;height:10px;background:#e2e2e2"></div>
<div class="abs" style="left:502.20000000000005px;top:0;width:1px;height:10px;background:#e2e2e2"></div>
<div class="abs" style="left:622.9px;top:0;width:1px;height:10px;background:#e2e2e2"></div>
<div class="abs" style="left:655.6px;top:0;width:1px;height:10px;background:#e2e2e2"></div>
<div class="abs" style="left:689.5px;top:0;width:1px;height:10px;background:#e2e2e2"></div>
</div>
<div class="row" style="top:128px;background:#ffffff">
<div class="abs" style="left:0.1px;top:0;width:12.4px;height:9.4px;background:#e282f0"></div>
<div class="cb" style="left:3.5px;top:2.0px"></div>
<svg class="abs" style="left:0px;top:0px" width="13" height="10" viewBox="0 0 13 10"><path d="M4.3 3.9 L6.1 5.8 L9.8 1.0" fill="none" stroke="#14234f" stroke-width="1.15" stroke-linecap="round" stroke-linejoin="round"/></svg>
<div class="cell" style="left:15.100000000000001px;width:102.5px;color:#111;">Hobson</div>
<div class="cell" style="left:120.0px;width:48.40000000000001px;color:#111;">00:90:4C:7E:0...</div>
<div class="cell" style="left:170.6px;width:77.39999999999999px;color:#111;">–88</div>
<div class="track" style="left:186.9px;top:2.1px;width:58.400000000000006px;"></div>
<div class="bar" style="left:186.9px;top:2.1px;width:9.7px;"></div>
<div class="cell" style="left:249.4px;width:20.29999999999999px;color:#111;">–87</div>
<div class="cell" style="left:272.0px;width:20.7px;color:#111;">–86</div>
<div class="cell r" style="left:292.7px;width:20.5px;color:#111;">4 dB</div>
<div class="cell r" style="left:314.7px;width:31.49999999999999px;color:#111;">6</div>
<div class="cell r" style="left:347.9px;width:24.80000000000001px;color:#111;">2.4 GHz</div>
<div class="cell r" style="left:374.7px;width:27.1px;color:#111;">20 MHz</div>
<div class="cell r" style="left:404.2px;width:30.50000000000002px;color:#111;">1</div>
<div class="cell" style="left:438.90000000000003px;width:25.70000000000001px;color:#111;">b/g</div>
<div class="cell r" style="left:464.6px;width:36.50000000000002px;color:#111;">54 Mbps</div>
<div class="cell" style="left:504.6px;width:118.79999999999993px;color:#111;">EPIGRAM, INC.</div>
<div class="cell" style="left:624.8px;width:31.300000000000047px;color:#111;">WEP</div>
<div class="cell" style="left:690.8px;width:42.300000000000026px;color:#111;">Just now</div>
<div class="abs" style="left:117.1px;top:0;width:1px;height:10px;background:#e2e2e2"></div>
<div class="abs" style="left:167.9px;top:0;width:1px;height:10px;background:#e2e2e2"></div>
<div class="abs" style="left:247.5px;top:0;width:1px;height:10px;background:#e2e2e2"></div>
<div class="abs" style="left:269.2px;top:0;width:1px;height:10px;background:#e2e2e2"></div>
<div class="abs" style="left:292.2px;top:0;width:1px;height:10px;background:#e2e2e2"></div>
<div class="abs" style="left:314.2px;top:0;width:1px;height:10px;background:#e2e2e2"></div>
<div class="abs" style="left:347.4px;top:0;width:1px;height:10px;background:#e2e2e2"></div>
<div class="abs" style="left:374.2px;top:0;width:1px;height:10px;background:#e2e2e2"></div>
<div class="abs" style="left:403.7px;top:0;width:1px;height:10px;background:#e2e2e2"></div>
<div class="abs" style="left:436.8px;top:0;width:1px;height:10px;background:#e2e2e2"></div>
<div class="abs" style="left:464.1px;top:0;width:1px;height:10px;background:#e2e2e2"></div>
<div class="abs" style="left:502.20000000000005px;top:0;width:1px;height:10px;background:#e2e2e2"></div>
<div class="abs" style="left:622.9px;top:0;width:1px;height:10px;background:#e2e2e2"></div>
<div class="abs" style="left:655.6px;top:0;width:1px;height:10px;background:#e2e2e2"></div>
<div class="abs" style="left:689.5px;top:0;width:1px;height:10px;background:#e2e2e2"></div>
</div>
<div class="row" style="top:138px;background:#eef3fb">
<div class="abs" style="left:0.1px;top:0;width:12.4px;height:9.4px;background:#e0a2b8"></div>
<div class="cb" style="left:3.5px;top:2.0px"></div>
<svg class="abs" style="left:0px;top:0px" width="13" height="10" viewBox="0 0 13 10"><path d="M4.3 3.9 L6.1 5.8 L9.8 1.0" fill="none" stroke="#14234f" stroke-width="1.15" stroke-linecap="round" stroke-linejoin="round"/></svg>
<div class="cell" style="left:15.100000000000001px;width:102.5px;color:#111;">RHNDVW320187C7C</div>
<div class="cell" style="left:120.0px;width:48.40000000000001px;color:#111;">7C:E9:D3:39:9...</div>
<div class="cell" style="left:170.6px;width:77.39999999999999px;color:#111;">–89</div>
<div class="track" style="left:186.9px;top:2.1px;width:58.400000000000006px;"></div>
<div class="bar" style="left:186.9px;top:2.1px;width:8.3px;"></div>
<div class="cell" style="left:249.4px;width:20.29999999999999px;color:#111;">–87</div>
<div class="cell" style="left:272.0px;width:20.7px;color:#111;">–86</div>
<div class="cell r" style="left:292.7px;width:20.5px;color:#111;">3 dB</div>
<div class="cell r" style="left:314.7px;width:31.49999999999999px;color:#111;">1</div>
<div class="cell r" style="left:347.9px;width:24.80000000000001px;color:#111;">2.4 GHz</div>
<div class="cell r" style="left:374.7px;width:27.1px;color:#111;">20 MHz</div>
<div class="cell r" style="left:404.2px;width:30.50000000000002px;color:#111;">2</div>
<div class="cell" style="left:438.90000000000003px;width:25.70000000000001px;color:#111;">n</div>
<div class="cell r" style="left:464.6px;width:36.50000000000002px;color:#111;">144 Mbps</div>
<div class="cell" style="left:504.6px;width:118.79999999999993px;color:#111;">Hon Hai Precision Ind. Co.,Ltd.</div>
<div class="cell" style="left:624.8px;width:31.300000000000047px;color:#111;">WPA</div>
<div class="cell" style="left:690.8px;width:42.300000000000026px;color:#111;">Just now</div>
<div class="abs" style="left:117.1px;top:0;width:1px;height:10px;background:#e2e2e2"></div>
<div class="abs" style="left:167.9px;top:0;width:1px;height:10px;background:#e2e2e2"></div>
<div class="abs" style="left:247.5px;top:0;width:1px;height:10px;background:#e2e2e2"></div>
<div class="abs" style="left:269.2px;top:0;width:1px;height:10px;background:#e2e2e2"></div>
<div class="abs" style="left:292.2px;top:0;width:1px;height:10px;background:#e2e2e2"></div>
<div class="abs" style="left:314.2px;top:0;width:1px;height:10px;background:#e2e2e2"></div>
<div class="abs" style="left:347.4px;top:0;width:1px;height:10px;background:#e2e2e2"></div>
<div class="abs" style="left:374.2px;top:0;width:1px;height:10px;background:#e2e2e2"></div>
<div class="abs" style="left:403.7px;top:0;width:1px;height:10px;background:#e2e2e2"></div>
<div class="abs" style="left:436.8px;top:0;width:1px;height:10px;background:#e2e2e2"></div>
<div class="abs" style="left:464.1px;top:0;width:1px;height:10px;background:#e2e2e2"></div>
<div class="abs" style="left:502.20000000000005px;top:0;width:1px;height:10px;background:#e2e2e2"></div>
<div class="abs" style="left:622.9px;top:0;width:1px;height:10px;background:#e2e2e2"></div>
<div class="abs" style="left:655.6px;top:0;width:1px;height:10px;background:#e2e2e2"></div>
<div class="abs" style="left:689.5px;top:0;width:1px;height:10px;background:#e2e2e2"></div>
</div>
</div>
<div class="abs" style="left:10px;top:197px;width:735.5px;height:254px;background:#e4e4e4;border:1px solid #cfcfcf;border-top-color:#c4c4c4;border-radius:2px"></div>
<div class="abs" style="left:265px;top:193px;width:226px;height:9px;border:1px solid #a4a4a4;border-radius:2px;background:linear-gradient(#ffffff,#ececec);overflow:hidden">
<div class="abs" style="left:0;top:0;width:55px;height:7px;background:linear-gradient(#8a8a8a,#767676)"></div>
<div class="abs" style="left:0;top:0;width:55px;height:7px;line-height:7.5px;font-size:6.1px;color:#e4e4e4;text-align:center;-webkit-text-stroke:.08px #e4e4e4">Network Details</div>
<div class="abs" style="left:55px;top:0;width:53px;height:7px;line-height:7.5px;font-size:6.1px;color:#111;text-align:center;-webkit-text-stroke:.12px #111">Signal Strength</div>
<div class="abs" style="left:107.5px;top:0;width:1px;height:7px;background:#c0c0c0"></div>
<div class="abs" style="left:108px;top:0;width:61px;height:7px;line-height:7.5px;font-size:6.1px;color:#111;text-align:center;-webkit-text-stroke:.12px #111">2.4 GHz Channels</div>
<div class="abs" style="left:168.5px;top:0;width:1px;height:7px;background:#c0c0c0"></div>
<div class="abs" style="left:169px;top:0;width:55px;height:7px;line-height:7.5px;font-size:6.1px;color:#111;text-align:center;-webkit-text-stroke:.12px #111">5 GHz Channels</div>
</div>
<div class="abs" style="right:616.9px;top:213.39999999999998px;letter-spacing:0px;height:10px;line-height:10px;font-size:7.3px;font-weight:bold;color:#1a1a1a;white-space:nowrap;-webkit-text-stroke:.1px #1a1a1a">SSID:</div>
<div class="abs" style="left:142.4px;top:213.39999999999998px;letter-spacing:0px;height:10px;line-height:10px;font-size:7.6px;color:#111;white-space:nowrap;-webkit-text-stroke:.15px #111">vanet-ax</div>
<div class="abs" style="right:616.9px;top:226.7px;letter-spacing:0px;height:10px;line-height:10px;font-size:7.3px;font-weight:bold;color:#1a1a1a;white-space:nowrap;-webkit-text-stroke:.1px #1a1a1a">BSSID:</div>
<div class="abs" style="left:142.4px;top:226.7px;letter-spacing:0px;height:10px;line-height:10px;font-size:7.6px;color:#111;white-space:nowrap;-webkit-text-stroke:.15px #111">5C:96:9D:69:E4:81</div>
<div class="abs" style="right:616.9px;top:239.7px;letter-spacing:0px;height:10px;line-height:10px;font-size:7.3px;font-weight:bold;color:#1a1a1a;white-space:nowrap;-webkit-text-stroke:.1px #1a1a1a">Vendor:</div>
<div class="abs" style="left:142.4px;top:239.7px;letter-spacing:0px;height:10px;line-height:10px;font-size:7.6px;color:#111;white-space:nowrap;-webkit-text-stroke:.15px #111">Apple</div>
<div class="abs" style="right:616.9px;top:252.7px;letter-spacing:0px;height:10px;line-height:10px;font-size:7.3px;font-weight:bold;color:#1a1a1a;white-space:nowrap;-webkit-text-stroke:.1px #1a1a1a">Data Rates:</div>
<div class="abs" style="left:142.4px;top:252.7px;letter-spacing:0.03px;height:10px;line-height:10px;font-size:7.6px;color:#111;white-space:nowrap;-webkit-text-stroke:.15px #111">1(B), 2(B), 5.5(B), 6, 7.2, 9, 11(B), 12, 14.4, 18, 21.7, 24, 28.9, 36, 43.3, 48, 54, 57.8, 65, 72.2, 86.7, 115.6, 130.3, 130, 144.4, 173.3, 195, 216.7 Mbps</div>
<div class="abs" style="right:394.8px;top:213.39999999999998px;letter-spacing:0px;height:10px;line-height:10px;font-size:7.3px;font-weight:bold;color:#1a1a1a;white-space:nowrap;-webkit-text-stroke:.1px #1a1a1a">Band:</div>
<div class="abs" style="left:364.5px;top:213.39999999999998px;letter-spacing:0px;height:10px;line-height:10px;font-size:7.6px;color:#111;white-space:nowrap;-webkit-text-stroke:.15px #111">2.4 GHz ISM</div>
<div class="abs" style="right:394.8px;top:226.7px;letter-spacing:0px;height:10px;line-height:10px;font-size:7.3px;font-weight:bold;color:#1a1a1a;white-space:nowrap;-webkit-text-stroke:.1px #1a1a1a">Type:</div>
<div class="abs" style="left:364.5px;top:226.7px;letter-spacing:0px;height:10px;line-height:10px;font-size:7.6px;color:#111;white-space:nowrap;-webkit-text-stroke:.15px #111">Infrastructure</div>
<div class="abs" style="right:394.8px;top:239.7px;letter-spacing:0px;height:10px;line-height:10px;font-size:7.3px;font-weight:bold;color:#1a1a1a;white-space:nowrap;-webkit-text-stroke:.1px #1a1a1a">Mode:</div>
<div class="abs" style="left:364.5px;top:239.7px;letter-spacing:0px;height:10px;line-height:10px;font-size:7.6px;color:#111;white-space:nowrap;-webkit-text-stroke:.15px #111">802.11b/g/n</div>
<div class="abs" style="right:174.79999999999995px;top:213.39999999999998px;letter-spacing:0px;height:10px;line-height:10px;font-size:7.3px;font-weight:bold;color:#1a1a1a;white-space:nowrap;-webkit-text-stroke:.1px #1a1a1a">Wi-Fi Protected Setup:</div>
<div class="abs" style="left:584.5px;top:213.39999999999998px;letter-spacing:0px;height:10px;line-height:10px;font-size:7.6px;color:#111;white-space:nowrap;-webkit-text-stroke:.15px #111">Not Detected</div>
<div class="abs" style="right:174.79999999999995px;top:226.7px;letter-spacing:0px;height:10px;line-height:10px;font-size:7.3px;font-weight:bold;color:#1a1a1a;white-space:nowrap;-webkit-text-stroke:.1px #1a1a1a">Security Mode:</div>
<div class="abs" style="left:584.5px;top:226.7px;letter-spacing:0px;height:10px;line-height:10px;font-size:7.6px;color:#111;white-space:nowrap;-webkit-text-stroke:.15px #111">WPA2 Personal</div>
<div class="abs" style="right:174.79999999999995px;top:239.7px;letter-spacing:0px;height:10px;line-height:10px;font-size:7.3px;font-weight:bold;color:#1a1a1a;white-space:nowrap;-webkit-text-stroke:.1px #1a1a1a">Encryption:</div>
<div class="abs" style="left:584.5px;top:239.7px;letter-spacing:0px;height:10px;line-height:10px;font-size:7.6px;color:#111;white-space:nowrap;-webkit-text-stroke:.15px #111">AES</div>
<svg class="abs" style="left:720px;top:222px" width="14" height="14" viewBox="720 222 14 14"><path d="M724.2 229V226.8a2.8 2.8 0 0 1 5.6 0V229" fill="none" stroke="#a4a4a4" stroke-width="1.3"/><rect x="722" y="228.6" width="10.3" height="6.2" fill="#a8a8a8"/><rect x="722" y="229.6" width="10.3" height="1.2" fill="#e8e8e8"/><rect x="722" y="231.6" width="10.3" height="3.2" fill="#8a8a8a"/><rect x="723" y="232.3" width="2" height="1.8" fill="#000"/><rect x="726.3" y="232.3" width="2" height="1.8" fill="#000"/><rect x="729.6" y="232.3" width="2" height="1.8" fill="#000"/></svg>
<div class="abs" style="left:20px;top:266.5px;width:715px;height:1px;background:#bcbcbc"></div>
<div class="abs" style="left:20px;top:267.5px;width:715px;height:1px;background:#f4f4f4"></div>
<div class="abs" style="right:616.9px;top:274.7px;letter-spacing:0px;height:10px;line-height:10px;font-size:7.3px;font-weight:bold;color:#1a1a1a;white-space:nowrap;-webkit-text-stroke:.1px #1a1a1a">Signal Quality:</div>
<div class="abs" style="left:142.4px;top:274.7px;letter-spacing:0px;height:10px;line-height:10px;font-size:7.6px;color:#111;white-space:nowrap;-webkit-text-stroke:.15px #111">Excellent</div>
<div class="abs" style="right:616.9px;top:288.0px;letter-spacing:0px;height:10px;line-height:10px;font-size:7.3px;font-weight:bold;color:#1a1a1a;white-space:nowrap;-webkit-text-stroke:.1px #1a1a1a">Channel Range:</div>
<div class="abs" style="left:142.4px;top:288.0px;letter-spacing:0px;height:10px;line-height:10px;font-size:7.6px;color:#111;white-space:nowrap;-webkit-text-stroke:.15px #111">11</div>
<div class="abs" style="right:616.9px;top:300.7px;letter-spacing:0px;height:10px;line-height:10px;font-size:7.3px;font-weight:bold;color:#1a1a1a;white-space:nowrap;-webkit-text-stroke:.1px #1a1a1a">Channel Width:</div>
<div class="abs" style="left:142.4px;top:300.7px;letter-spacing:0px;height:10px;line-height:10px;font-size:7.6px;color:#111;white-space:nowrap;-webkit-text-stroke:.15px #111">20 MHz</div>
<div class="abs" style="right:394.8px;top:274.7px;letter-spacing:0px;height:10px;line-height:10px;font-size:7.3px;font-weight:bold;color:#1a1a1a;white-space:nowrap;-webkit-text-stroke:.1px #1a1a1a">Signal:</div>
<div class="abs" style="left:364.5px;top:274.7px;letter-spacing:0px;height:10px;line-height:10px;font-size:7.6px;color:#111;white-space:nowrap;-webkit-text-stroke:.15px #111">–47 dBm</div>
<div class="abs" style="right:394.8px;top:288.0px;letter-spacing:0px;height:10px;line-height:10px;font-size:7.3px;font-weight:bold;color:#1a1a1a;white-space:nowrap;-webkit-text-stroke:.1px #1a1a1a">Noise:</div>
<div class="abs" style="left:364.5px;top:288.0px;letter-spacing:0px;height:10px;line-height:10px;font-size:7.6px;color:#111;white-space:nowrap;-webkit-text-stroke:.15px #111">–92 dBm</div>
<div class="abs" style="right:394.8px;top:300.7px;letter-spacing:0.19px;height:10px;line-height:10px;font-size:7.3px;font-weight:bold;color:#1a1a1a;white-space:nowrap;-webkit-text-stroke:.1px #1a1a1a">Signal-to-Noise Ratio:</div>
<div class="abs" style="left:364.5px;top:300.7px;letter-spacing:0px;height:10px;line-height:10px;font-size:7.6px;color:#111;white-space:nowrap;-webkit-text-stroke:.15px #111">45 dB</div>
<div class="abs" style="right:174.79999999999995px;top:274.7px;letter-spacing:0.31px;height:10px;line-height:10px;font-size:7.3px;font-weight:bold;color:#1a1a1a;white-space:nowrap;-webkit-text-stroke:.1px #1a1a1a">Signal Avg/Min/Max:</div>
<div class="abs" style="left:584.5px;top:274.7px;letter-spacing:0px;height:10px;line-height:10px;font-size:7.6px;color:#111;white-space:nowrap;-webkit-text-stroke:.15px #111">–46/–71/–42 dBm</div>
<div class="abs" style="right:174.79999999999995px;top:288.0px;letter-spacing:0.31px;height:10px;line-height:10px;font-size:7.3px;font-weight:bold;color:#1a1a1a;white-space:nowrap;-webkit-text-stroke:.1px #1a1a1a">Noise Avg/Min/Max:</div>
<div class="abs" style="left:584.5px;top:288.0px;letter-spacing:0px;height:10px;line-height:10px;font-size:7.6px;color:#111;white-space:nowrap;-webkit-text-stroke:.15px #111">–92/–92/–92 dBm</div>
<div class="abs" style="right:174.79999999999995px;top:300.7px;letter-spacing:0.24px;height:10px;line-height:10px;font-size:7.3px;font-weight:bold;color:#1a1a1a;white-space:nowrap;-webkit-text-stroke:.1px #1a1a1a">SNR Avg/Min/Max:</div>
<div class="abs" style="left:584.5px;top:300.7px;letter-spacing:0px;height:10px;line-height:10px;font-size:7.6px;color:#111;white-space:nowrap;-webkit-text-stroke:.15px #111">45/21/50 dB</div>
<div class="abs" style="left:21px;top:318.5px;width:713px;height:122px;background:#dcdcdc;border:1px solid #cacaca;border-top-color:#c2c2c2;border-bottom-color:#ececec;border-right-color:#d8d8d8"></div>
<div class="abs" style="left:29.6px;top:347.6px;width:8px;height:8px;border-radius:50%;border:0.8px solid #6f8fb8;background:radial-gradient(circle,#1f2f55 0 1.2px,#a9c9ee 1.6px,#d4e6fa 3.6px)"></div>
<div class="abs" style="left:39.5px;top:346.5px;height:10px;line-height:10px;font-size:7.6px;color:#111;-webkit-text-stroke:.1px #111">Signal</div>
<div class="abs" style="left:40.5px;top:374px;width:6.5px;height:6.5px;border-radius:1px;border:1px solid #8a8a8a;background:linear-gradient(#ffffff,#e4e4e4)"></div>
<div class="abs" style="left:50px;top:372.5px;height:10px;line-height:10px;font-size:7.6px;color:#111;-webkit-text-stroke:.1px #111">Noise</div>
<div class="abs" style="left:29.5px;top:401.8px;width:7.6px;height:7.6px;border-radius:50%;border:0.8px solid #999;background:linear-gradient(#ffffff,#e6e6e6)"></div>
<div class="abs" style="left:39.5px;top:401px;height:10px;line-height:10px;font-size:7.6px;color:#111;-webkit-text-stroke:.1px #111">SNR</div>
<svg class="abs" style="left:84px;top:324px" width="643" height="111" viewBox="84 324 643 111"><rect x="84" y="324" width="643" height="111" fill="#000"/><rect x="115.7" y="336.2" width="593.3" height="82.80000000000001" fill="#0f0736"/><line x1="115.7" y1="336.7" x2="709" y2="336.7" stroke="#3a3060" stroke-width="1"/><polygon points="115.7,419 115.7,373.4 130.1,374.2 134.8,372.5 146.7,373.9 161.8,373.9 167.4,371.5 178.5,373.4 196,371.5 201.5,374 216.6,373.6 224.5,373 235,373.7 241.3,373.1 279.4,372.5 289.8,374.2 301.7,373.4 335,373.4 347.7,371.5 355,372.3 364.5,373.4 397.9,373.4 401,372.5 411.3,374.2 434.4,373.4 447,369.6 466,370.7 475,371.5 486.9,369.6 498.8,370.3 531.3,370.3 535,394.5 547.2,373.9 603.7,373.9 608.5,376 633,376 640.2,371.5 661.7,373.7 674.4,372.5 685.5,373.9 709,373.9 709,419" fill="#424276"/><line x1="115.7" y1="342.3" x2="709" y2="342.3" stroke="#6a5ca8" stroke-opacity=".45" stroke-width="0.8"/><line x1="115.7" y1="359.3" x2="709" y2="359.3" stroke="#6a5ca8" stroke-opacity=".45" stroke-width="0.8"/><line x1="115.7" y1="376.3" x2="709" y2="376.3" stroke="#6a5ca8" stroke-opacity=".45" stroke-width="0.8"/><line x1="115.7" y1="393.3" x2="709" y2="393.3" stroke="#6a5ca8" stroke-opacity=".45" stroke-width="0.8"/><line x1="115.7" y1="410.3" x2="709" y2="410.3" stroke="#6a5ca8" stroke-opacity=".45" stroke-width="0.8"/><polyline points="115.7,373.4 130.1,374.2 134.8,372.5 146.7,373.9 161.8,373.9 167.4,371.5 178.5,373.4 196,371.5 201.5,374 216.6,373.6 224.5,373 235,373.7 241.3,373.1 279.4,372.5 289.8,374.2 301.7,373.4 335,373.4 347.7,371.5 355,372.3 364.5,373.4 397.9,373.4 401,372.5 411.3,374.2 434.4,373.4 447,369.6 466,370.7 475,371.5 486.9,369.6 498.8,370.3 531.3,370.3 535,394.5 547.2,373.9 603.7,373.9 608.5,376 633,376 640.2,371.5 661.7,373.7 674.4,372.5 685.5,373.9 709,373.9" fill="none" stroke="#b8cbf2" stroke-width="1.3" stroke-linejoin="round"/><line x1="535" y1="336.2" x2="535" y2="419" stroke="#8fa8e8" stroke-width="0.7" stroke-opacity=".6"/><circle cx="535" cy="394" r="1.6" fill="#c8dcff"/><path d="M487.8 376 H524.7 A3.5 3.5 0 0 1 528.2 379.5 V384 L534.6 393.8 L519 390.2 H487.8 A3.5 3.5 0 0 1 484.3 386.7 V379.5 A3.5 3.5 0 0 1 487.8 376 Z" fill="#858585" fill-opacity=".93"/><text x="492" y="385.7" font-size="6.9" fill="#ececec" font-family="Liberation Sans" textLength="28" lengthAdjust="spacingAndGlyphs">-71 dBm</text><text x="104" y="344.2" font-size="6.4" font-weight="bold" fill="#44c844" stroke="#44c844" stroke-width="0.15" font-family="Liberation Sans" textLength="9.7" lengthAdjust="spacingAndGlyphs">–10</text><text x="710.6" y="344.2" font-size="6.4" font-weight="bold" fill="#44c844" stroke="#44c844" stroke-width="0.15" font-family="Liberation Sans" textLength="9.7" lengthAdjust="spacingAndGlyphs">–10</text><text x="104" y="361.2" font-size="6.4" font-weight="bold" fill="#44c844" stroke="#44c844" stroke-width="0.15" font-family="Liberation Sans" textLength="9.7" lengthAdjust="spacingAndGlyphs">–30</text><text x="710.6" y="361.2" font-size="6.4" font-weight="bold" fill="#44c844" stroke="#44c844" stroke-width="0.15" font-family="Liberation Sans" textLength="9.7" lengthAdjust="spacingAndGlyphs">–30</text><text x="104" y="378.2" font-size="6.4" font-weight="bold" fill="#44c844" stroke="#44c844" stroke-width="0.15" font-family="Liberation Sans" textLength="9.7" lengthAdjust="spacingAndGlyphs">–50</text><text x="710.6" y="378.2" font-size="6.4" font-weight="bold" fill="#44c844" stroke="#44c844" stroke-width="0.15" font-family="Liberation Sans" textLength="9.7" lengthAdjust="spacingAndGlyphs">–50</text><text x="104" y="395.2" font-size="6.4" font-weight="bold" fill="#dcd068" stroke="#dcd068" stroke-width="0.15" font-family="Liberation Sans" textLength="9.7" lengthAdjust="spacingAndGlyphs">–70</text><text x="710.6" y="395.2" font-size="6.4" font-weight="bold" fill="#dcd068" stroke="#dcd068" stroke-width="0.15" font-family="Liberation Sans" textLength="9.7" lengthAdjust="spacingAndGlyphs">–70</text><text x="104" y="412.2" font-size="6.4" font-weight="bold" fill="#c81c1c" stroke="#c81c1c" stroke-width="0.15" font-family="Liberation Sans" textLength="9.7" lengthAdjust="spacingAndGlyphs">–90</text><text x="710.6" y="412.2" font-size="6.4" font-weight="bold" fill="#c81c1c" stroke="#c81c1c" stroke-width="0.15" font-family="Liberation Sans" textLength="9.7" lengthAdjust="spacingAndGlyphs">–90</text><text transform="translate(95.2 379.2) rotate(-90)" font-size="6.25" fill="#d8d8d8" stroke="#d8d8d8" stroke-width="0.1" text-anchor="middle" font-family="Liberation Sans">Signal Strength (dBm)</text><line x1="129.6" y1="419" x2="129.6" y2="421.3" stroke="#9a9a9a" stroke-width=".8"/><text x="116.19999999999999" y="428.9" font-size="7" fill="#ececec" stroke="#ececec" stroke-width="0.1" font-family="Liberation Sans" textLength="26.8" lengthAdjust="spacingAndGlyphs">10:35 PM</text><line x1="248.3" y1="419" x2="248.3" y2="421.3" stroke="#9a9a9a" stroke-width=".8"/><text x="234.9" y="428.9" font-size="7" fill="#ececec" stroke="#ececec" stroke-width="0.1" font-family="Liberation Sans" textLength="26.8" lengthAdjust="spacingAndGlyphs">10:36 PM</text><line x1="367" y1="419" x2="367" y2="421.3" stroke="#9a9a9a" stroke-width=".8"/><text x="353.6" y="428.9" font-size="7" fill="#ececec" stroke="#ececec" stroke-width="0.1" font-family="Liberation Sans" textLength="26.8" lengthAdjust="spacingAndGlyphs">10:37 PM</text><line x1="485.2" y1="419" x2="485.2" y2="421.3" stroke="#9a9a9a" stroke-width=".8"/><text x="471.8" y="428.9" font-size="7" fill="#ececec" stroke="#ececec" stroke-width="0.1" font-family="Liberation Sans" textLength="26.8" lengthAdjust="spacingAndGlyphs">10:38 PM</text><line x1="603.5" y1="419" x2="603.5" y2="421.3" stroke="#9a9a9a" stroke-width=".8"/><text x="590.1" y="428.9" font-size="7" fill="#ececec" stroke="#ececec" stroke-width="0.1" font-family="Liberation Sans" textLength="26.8" lengthAdjust="spacingAndGlyphs">10:39 PM</text><text x="701.7" y="428.9" font-size="7" fill="#ececec" stroke="#ececec" stroke-width="0.1" font-family="Liberation Sans" textLength="13.3" lengthAdjust="spacingAndGlyphs">Now</text><text x="517.7" y="332.7" font-size="6.8" fill="#ececec" stroke="#ececec" stroke-width="0.1" font-family="Liberation Sans" textLength="35.3" lengthAdjust="spacingAndGlyphs">10:38:25 PM</text></svg>
<div class="abs" style="left:10px;top:456.5px;height:10px;line-height:10px;font-size:6.8px;color:#111;white-space:nowrap;-webkit-text-stroke:.15px #111">Networks Found: 16, Displayed: 16 (10090</div>
</div></body></html>
